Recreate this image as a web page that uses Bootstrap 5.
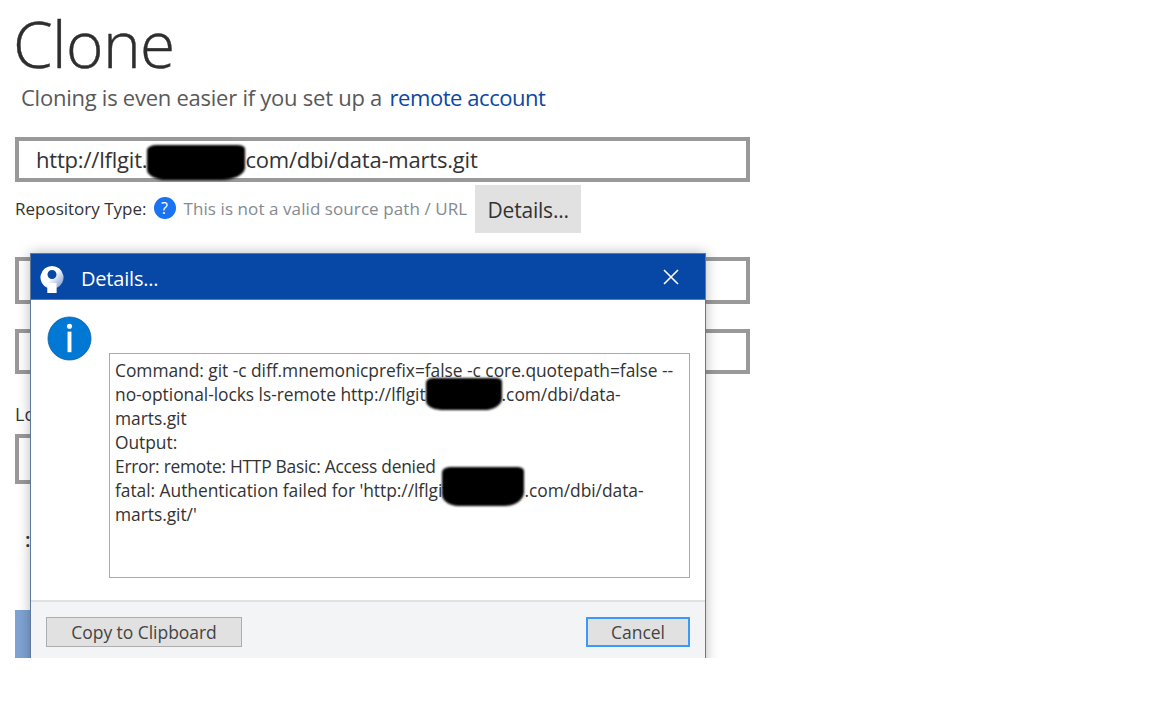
<!DOCTYPE html>
<html lang="en">
<head>
<meta charset="utf-8">
<title>Clone</title>
<link href="https://cdn.jsdelivr.net/npm/bootstrap@5.3.0/dist/css/bootstrap.min.css" rel="stylesheet">
<style>
html,body{background:#fff;margin:0}
body{font-family:"Open Sans","Noto Sans","Liberation Sans",sans-serif;color:#333}
.stage{position:relative;width:1152px;height:658px;overflow:hidden;padding-left:15px}
.page-title{font-size:64px;font-weight:300;line-height:72px;margin:8px 0 0 -2px;color:#2e2e2e;letter-spacing:-.6px;-webkit-text-stroke:.4px #2e2e2e}
.intro{font-size:22px;line-height:30px;color:#595959;margin:2px 0 0 6px;letter-spacing:-.25px}
.intro a{color:#0a47a6;text-decoration:none;margin-left:2px;letter-spacing:-.45px}
.field{width:735px;border:4px solid #999;background:#fff;display:flex;align-items:center;padding-left:17px;font-size:22px;color:#333;letter-spacing:-.2px}
.url-field{height:45px;margin-top:25px}
.blob{display:inline-block;background:#000;border-radius:10% 8% 24% 20%/14% 10% 36% 30%;filter:blur(.8px)}
.blob-a{width:98px;height:35px;vertical-align:-4px;margin:-8px 0}
.type-row{height:48px;margin-top:3px;font-size:17px}
.type-note{color:#858a91;margin-left:8px;letter-spacing:.08px}
.help{width:22px;height:22px;background:#1a73f0;color:#fff;border-radius:50%;font-size:16px;font-weight:400;line-height:22px;text-align:center;margin:0 0 2px 7px}
.detail-btn{background:#e1e1e1;border:0;border-radius:0;height:48px;width:106px;margin-left:8px;font-size:21px;color:#333;padding:3px 0 0;letter-spacing:-.2px}
.f2{height:47px;margin-top:24px}
.f3{height:45px;margin-top:25px}
.lo-label{font-size:18px;line-height:24px;margin-top:28px;height:24px}
.f4{height:50px;margin-top:8px;width:100px}
.colon{font-size:20px;font-weight:600;line-height:24px;margin:44px 0 0 10px}
.ghost-btn{width:200px;height:48px;background:#7fa3d3;margin-top:58px}
.dialog-win{position:absolute;left:30px;top:253px;width:676px;height:420px;background:#fff;border:1px solid #5d7a9e;box-shadow:0 0 12px rgba(0,0,0,.28);display:flex;flex-direction:column}
.win-bar{height:46px;flex:none;background:#0747a6;border-bottom:1px solid #4a80c8;color:#fff;font-size:20px;letter-spacing:-.2px}
.win-logo{margin:5px 0 0 8px;width:26px;height:27px;flex:none}
.win-name{margin-left:16px;padding-top:5px}
.win-x{margin-left:auto;margin-right:25px;width:18px;height:18px}
.win-body{height:300px;flex:none;display:flex;padding:16px 15px 0 16px}
.info-ico{width:45px;height:45px;flex:none}
.log-box{margin:37px 0 0 17px;width:581px;height:225px;border:1px solid #aaa;padding:4px 5px;font-size:17.4px;line-height:24px;color:#333;letter-spacing:-.04px;white-space:nowrap;overflow:hidden}
.tight-line{letter-spacing:-.27px}
.blob-b{width:76px;height:32px;vertical-align:-1px;margin:-8px 0}
.blob-c{width:82px;height:39px;vertical-align:3px;margin:-12px 0 -12px -6px}
.win-foot{flex:1;background:#f3f4f6;border-top:2px solid #e1e1e1;padding:15px 15px 0 15px;display:flex;justify-content:space-between;align-items:flex-start}
.foot-btn{height:30px;background:#e1e1e1;border:1px solid #adadad;border-radius:0;font-size:17.5px;line-height:1;padding:2px 0 0;color:#444;letter-spacing:-.05px}
.copy-btn{width:196px}
.cancel-btn{width:104px;border:2px solid #3b99fc}
</style>
</head>
<body>
<div class="stage">
  <h1 class="page-title">Clone</h1>
  <p class="intro">Cloning is even easier if you set up a <a href="#">remote account</a></p>
  <div class="field url-field"><span>http://lflgit.<span class="blob blob-a"></span>com/dbi/data-marts.git</span></div>
  <div class="type-row d-flex align-items-center">
    <span>Repository Type:</span>
    <span class="help">?</span>
    <span class="type-note">This is not a valid source path / URL</span>
    <button type="button" class="detail-btn">Details...</button>
  </div>
  <div class="field f2"></div>
  <div class="field f3"></div>
  <div class="lo-label">Lo</div>
  <div class="field f4"></div>
  <div class="colon">:</div>
  <div class="ghost-btn"></div>

  <div class="dialog-win">
    <div class="win-bar d-flex align-items-center">
      <svg class="win-logo" viewBox="0 0 26 27" aria-hidden="true">
        <defs><linearGradient id="lg" x1="0" y1="0" x2="1" y2="1"><stop offset=".45" stop-color="#fff"/><stop offset=".95" stop-color="#5f86c4"/></linearGradient></defs>
        <path fill="url(#lg)" fill-rule="evenodd" d="M13 0a11.5 11.5 0 0 1 4.5 22.1V27H8.5V22.1A11.5 11.5 0 0 1 13 0zm0 4a4.5 4.5 0 1 0 0 9 4.5 4.5 0 0 0 0-9z"/>
        <rect x="8.5" y="17" width="9" height="10" fill="#fff"/>
      </svg>
      <span class="win-name">Details...</span>
      <svg class="win-x" viewBox="0 0 18 18" aria-hidden="true"><path d="M2 2l14 14M16 2L2 16" stroke="#fff" stroke-width="1.6" fill="none"/></svg>
    </div>
    <div class="win-body">
      <svg class="info-ico" viewBox="0 0 46 46" aria-hidden="true">
        <circle cx="23" cy="23" r="22" fill="#0078d4" stroke="#0a5fa8" stroke-width=".8"/>
        <rect x="21" y="16" width="4" height="21" fill="#fff"/>
        <circle cx="23" cy="10.5" r="2.6" fill="#fff"/>
      </svg>
      <div class="log-box">Command: git -c diff.mnemonicprefix=false -c core.quotepath=false --<br>no-optional-locks ls-remote http://lflgit<span class="blob blob-b"></span>.com/dbi/data-<br>marts.git<br>Output:<br><span class="tight-line">Error: remote: HTTP Basic: Access denied</span><br>fatal: Authentication failed for 'http://lflgit<span class="blob blob-c"></span>.com/dbi/data-<br>marts.git/'</div>
    </div>
    <div class="win-foot">
      <button type="button" class="foot-btn copy-btn">Copy to Clipboard</button>
      <button type="button" class="foot-btn cancel-btn">Cancel</button>
    </div>
  </div>
</div>
<script src="https://cdn.jsdelivr.net/npm/bootstrap@5.3.0/dist/js/bootstrap.bundle.min.js"></script>
</body>
</html>
